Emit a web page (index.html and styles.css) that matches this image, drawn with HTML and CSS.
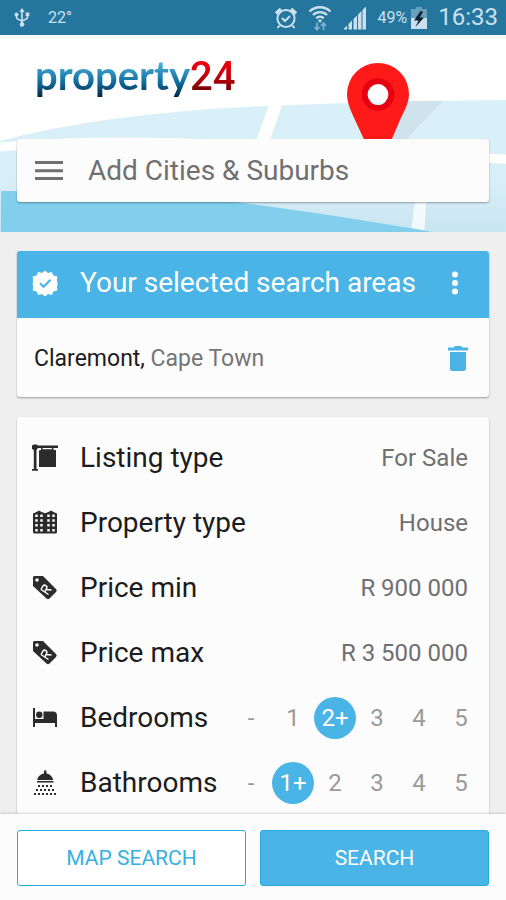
FILE: index.html
```html
<!DOCTYPE html>
<html lang="en">
<head>
<meta charset="utf-8">
<meta name="viewport" content="width=device-width, initial-scale=1">
<title>property24</title>
<link rel="stylesheet" href="styles.css">
</head>
<body>
<header class="status">
  <svg class="usb" width="16" height="20" viewBox="0 0 16 20" fill="none" stroke="currentColor" stroke-width="1.6" aria-hidden="true">
    <path d="M8 3v13M2.500 7v2.500c0 2.500 5.500 2 5.500 4.500M13.500 6v3.500c0 2.500-5.500 2-5.500 4.500"/>
    <path d="M8 0l2.700 4H5.300zM11.700 4.500h3.600v3.600h-3.600z" fill="currentColor" stroke="none"/>
    <circle cx="2.500" cy="6.500" r="2" fill="currentColor" stroke="none"/>
    <circle cx="8" cy="16.500" r="2.300" fill="currentColor" stroke="none"/>
  </svg>
  <span class="temp">22°</span>
  <div class="status-right">
    <svg width="22" height="24" viewBox="0 0 22 24" fill="none" stroke="currentColor" stroke-width="2" aria-hidden="true">
      <circle cx="11" cy="12.500" r="8.600"/>
      <path d="M7 12l3 3 5-5M4.500 19.500L2.500 22M17.500 19.500l2 2.500"/>
      <path d="M1 7.500L6 3M21 7.500L16 3" stroke-width="3.400"/>
    </svg>
    <svg width="24" height="26" viewBox="0 0 24 26" fill="none" stroke="currentColor" stroke-width="2.400" aria-hidden="true">
      <path d="M1.500 6.500a15 15 0 0 1 21 0M5 10a10 10 0 0 1 14 0M8.300 13.300a5.300 5.300 0 0 1 7.400 0"/>
      <circle cx="12" cy="15.800" r="1.600" fill="currentColor" stroke="none"/>
      <path d="M9 17.500v7M6.500 22L9 24.800 11.500 22M15.500 25v-6.500M13 20.800l2.500-2.800 2.500 2.800" stroke-width="1.800" opacity=".55"/>
    </svg>
    <svg width="24" height="24" viewBox="0 0 24 24" fill="currentColor" aria-hidden="true">
      <path d="M1 23.500v-1l3-3v4zM5.500 23.500V18l3.500-3.500v9zM10.500 23.500V13L14 9.500v14zM15 23.500V8.500L18.500 5v18.500zM19.500 23.500V4L23 .5v23z"/>
    </svg>
    <span class="battery-level">49%</span>
    <svg width="16" height="22" viewBox="0 0 16 22" aria-hidden="true">
      <path d="M5 0h6v2h5v10H0V2h5z" fill="currentColor" opacity=".4"/>
      <path d="M0 11h16v11H0z" fill="currentColor"/>
      <path d="M9.500 4L3 13.500h4.500L4.500 20 13 10.500H8.800L12 4.800z" fill="#0d2230"/>
    </svg>
    <time class="clock">16:33</time>
  </div>
</header>

<main class="content">
  <section class="hero">
    <svg class="map" viewBox="0 0 506 197" preserveAspectRatio="xMidYMid slice" aria-hidden="true">
      <defs>
        <linearGradient id="land" x1="0" y1="0" x2="0" y2="1">
          <stop offset="0" stop-color="#daf0f9"/><stop offset=".6" stop-color="#d9eff8"/><stop offset="1" stop-color="#c9e5f1"/>
        </linearGradient>
      </defs>
      <rect width="506" height="197" fill="#fff"/>
      <path d="M0 106Q100 79 253 71.500 380 66 506 65v132H0z" fill="url(#land)"/>
      <path d="M0 112Q60 106.500 130 107T300 112 510 124.500" fill="none" stroke="#fff" stroke-width="9"/>
      <path d="M276 69L262 108" fill="none" stroke="#fff" stroke-width="12.500"/>
      <path d="M415 165h11.500l-2 30-13-2z" fill="#f3fafd"/>
      <path d="M1 156H130Q253 166 433 197H1z" fill="#82ceed"/>
      <path d="M395 66.500l48-.8-40 42H378z" fill="#cfe3ec"/>
      <path d="M378 28a31 31 0 0 0-31 31c0 10 5 19 8 26l13 28h20l12-28c3-7 9-16 9-26a31 31 0 0 0-31-31z" fill="#ff1a1a"/>
      <circle cx="378" cy="59.500" r="16.300" fill="#e60012"/>
      <circle cx="378" cy="59.500" r="10.400" fill="#fff"/>
      <path d="M370.500 66.800h15a10.400 10.400 0 0 1-15 0z" fill="#e4f3f9"/>
    </svg>
    <h1 class="logo"><span class="logo-name">property</span><span class="logo-num">24</span></h1>
    <form class="search" role="search">
      <button class="icon-button" type="button" aria-label="Menu">
        <svg width="28" height="20" viewBox="0 0 28 20" fill="#707070" aria-hidden="true"><path d="M0 0h28v3H0zM0 8.300h28v3H0zM0 16h28v3H0z"/></svg>
      </button>
      <input class="search-input" type="text" placeholder="Add Cities &amp; Suburbs" aria-label="Add Cities &amp; Suburbs">
    </form>
  </section>

  <section class="card areas">
    <header class="areas-head">
      <svg class="badge" width="26" height="26" viewBox="0 0 26 26" aria-hidden="true">
        <path d="M13 .5l3 2.600 3.800-1.200 1.600 3.700 3.900.9-.4 4 .8 3-.8 3 .4 3.900-3.900 1-1.600 3.600-3.800-1.100-3 2.600-3-2.600-3.800 1.100-1.600-3.600-3.900-1 .4-3.900L.6 13.500l.5-3-.4-4 3.900-.9 1.600-3.700L10 3.100z" fill="#fff"/>
        <path d="M8 13.200l3.600 3.600 7-7" fill="none" stroke="#49b4e5" stroke-width="2.200"/>
      </svg>
      <h2 class="areas-title">Your selected search areas</h2>
      <button class="icon-button" type="button" aria-label="More options">
        <svg width="6" height="24" viewBox="0 0 6 24" fill="#fff" aria-hidden="true"><circle cx="3" cy="3.500" r="3"/><circle cx="3" cy="12" r="3"/><circle cx="3" cy="20.500" r="3"/></svg>
      </button>
    </header>
    <div class="area">
      <p class="area-name">Claremont, <span class="area-city">Cape Town</span></p>
      <button class="icon-button" type="button" aria-label="Remove Claremont">
        <svg width="20" height="26" viewBox="0 0 20 26" fill="#49b4e5" aria-hidden="true"><path d="M0 1.500h5.500L7 0h6l1.500 1.500H20v3H0zM2 6h16v16.500a2.500 2.500 0 0 1-2.500 2.500h-11A2.500 2.500 0 0 1 2 22.500z"/></svg>
      </button>
    </div>
  </section>

  <section class="card filters">
    <div class="row">
      <svg class="row-icon" width="28" height="28" viewBox="0 0 28 28" fill="#2b2b2b" aria-hidden="true"><path d="M1 1.500L3 .5h2.500l1.500 1H27v2.500H7L5.500 6v19H7v1.700H1V25h1.800V6L1 5z"/><path d="M8 6.500l2-.5V4h1.500v1.200H21V4h1.500v2H25v17H8z"/></svg>
      <label class="row-label" for="listing">Listing type</label>
      <select class="value" id="listing"><option>For Sale</option></select>
    </div>
    <div class="row">
      <svg class="row-icon" width="28" height="28" viewBox="0 0 28 28" aria-hidden="true">
        <path d="M2 6V4.500L5.500 3l2.500-1.500L10.500 3l3.500 1.200L17.500 3 20 1.500 22.500 3 26 4.500V23a1.500 1.500 0 0 1-1.500 1.500h-21A1.500 1.500 0 0 1 2 23z" fill="#2b2b2b"/>
        <path d="M5.500 5.500v17M10.500 5.500v17M17.500 5.500v17M22.500 5.500v17" stroke="#fcfcfc" stroke-width="2.500" stroke-dasharray="2.500 2.300" fill="none"/>
      </svg>
      <label class="row-label" for="property">Property type</label>
      <select class="value" id="property"><option>House</option></select>
    </div>
    <div class="row">
      <svg class="row-icon" width="28" height="28" viewBox="0 0 28 28" aria-hidden="true">
        <path d="M2 3.500A1.500 1.500 0 0 1 3.500 2H12l13 13q1.500 1.500 0 3l-6.500 6.500q-1.500 1.500-3 0L2 12z" fill="#2b2b2b"/>
        <circle cx="6" cy="6" r="1.800" fill="#fcfcfc"/>
        <path d="M10 15.500l7.500 5M10 15.500l2-3.500c1.500-2 5 0 3.500 2.500l-1.500 3M15 15.500l5.500.5" fill="none" stroke="#fcfcfc" stroke-width="1.500"/>
      </svg>
      <label class="row-label" for="min">Price min</label>
      <select class="value" id="min"><option>R 900 000</option></select>
    </div>
    <div class="row">
      <svg class="row-icon" width="28" height="28" viewBox="0 0 28 28" aria-hidden="true">
        <path d="M2 3.500A1.500 1.500 0 0 1 3.500 2H12l13 13q1.500 1.500 0 3l-6.500 6.500q-1.500 1.500-3 0L2 12z" fill="#2b2b2b"/>
        <circle cx="6" cy="6" r="1.800" fill="#fcfcfc"/>
        <path d="M10 15.500l7.500 5M10 15.500l2-3.500c1.500-2 5 0 3.500 2.500l-1.500 3M15 15.500l5.500.5" fill="none" stroke="#fcfcfc" stroke-width="1.500"/>
      </svg>
      <label class="row-label" for="max">Price max</label>
      <select class="value" id="max"><option>R 3 500 000</option></select>
    </div>
    <div class="row" role="radiogroup" aria-labelledby="beds">
      <svg class="row-icon" width="28" height="28" viewBox="0 0 28 28" fill="#2b2b2b" aria-hidden="true"><path d="M2 4h2v11h8.500V7.500H22a4 4 0 0 1 4 4V23h-2v-4H4v4H2z"/><circle cx="8.300" cy="10.800" r="3.200"/></svg>
      <span class="row-label" id="beds">Bedrooms</span>
      <div class="steps">
        <label class="step"><input type="radio" name="beds"><span>-</span></label>
        <label class="step"><input type="radio" name="beds"><span>1</span></label>
        <label class="step"><input type="radio" name="beds" checked><span>2+</span></label>
        <label class="step"><input type="radio" name="beds"><span>3</span></label>
        <label class="step"><input type="radio" name="beds"><span>4</span></label>
        <label class="step"><input type="radio" name="beds"><span>5</span></label>
      </div>
    </div>
    <div class="row" role="radiogroup" aria-labelledby="baths">
      <svg class="row-icon" width="28" height="28" viewBox="0 0 28 28" fill="#2b2b2b" aria-hidden="true">
        <path d="M13 1.500h2.400v3c3.600.6 6.300 3.200 6.800 6.500h-16c.5-3.300 3.200-5.900 6.800-6.500zM6 12h16.500v1.500H6z"/>
        <g fill="none" stroke="#2b2b2b" stroke-width="2"><path d="M7 17h14" stroke-dasharray="2 2"/><path d="M5 21h18" stroke-dasharray="2 2"/><path d="M3 25h22" stroke-dasharray="2 2"/></g>
      </svg>
      <span class="row-label" id="baths">Bathrooms</span>
      <div class="steps">
        <label class="step"><input type="radio" name="baths"><span>-</span></label>
        <label class="step"><input type="radio" name="baths" checked><span>1+</span></label>
        <label class="step"><input type="radio" name="baths"><span>2</span></label>
        <label class="step"><input type="radio" name="baths"><span>3</span></label>
        <label class="step"><input type="radio" name="baths"><span>4</span></label>
        <label class="step"><input type="radio" name="baths"><span>5</span></label>
      </div>
    </div>
  </section>
</main>

<footer class="actions">
  <button class="action outline" type="button">MAP SEARCH</button>
  <button class="action solid" type="button">SEARCH</button>
</footer>
</body>
</html>
```
FILE: styles.css
```css
* { box-sizing: border-box; }

body {
  margin: 0;
  height: 100vh;
  display: flex;
  flex-direction: column;
  background: #efefef;
  color: #1c1c1c;
  font-family: Roboto, "Liberation Sans", sans-serif;
}

button, input, select { font: inherit; color: inherit; }
svg { display: block; flex: none; }

.status {
  display: flex;
  align-items: center;
  flex: none;
  padding: 0 8px 0 14px;
  height: 35px;
  background: #24769f;
  color: #cbe0ec;
}
.temp {
  margin-left: 18px;
  font-size: 16px;
}
.status-right {
  display: flex;
  align-items: center;
  gap: 11px;
  margin-left: auto;
}
.battery-level { font-size: 16px; margin-right: -7px; }
.clock { font-size: 24px; line-height: 35px; }

.content {
  flex: 1;
  min-height: 0;
  overflow-y: auto;
  scrollbar-width: none;
}

.hero {
  position: relative;
  padding: 16px 17px 30px;
}
.map {
  position: absolute;
  inset: 0;
  width: 100%;
  height: 100%;
}
.logo {
  position: relative;
  display: flex;
  align-items: baseline;
  margin: 0 0 38px 18px;
  font-family: Lato, sans-serif;
  font-size: 40px;
  line-height: 48px;
  font-weight: 700;
}
.logo-name, .logo-num {
  color: transparent;
  -webkit-background-clip: text;
  background-clip: text;
}
.logo-name { background-image: linear-gradient(#48acd8 28%, #0f6d9e 65%, #062846 95%); }
.logo-num {
  background-image: linear-gradient(#f00010 18%, #c0000a 50%, #700000 80%);
  font-family: Roboto, sans-serif;
  font-weight: 500;
}

.search {
  position: relative;
  display: flex;
  align-items: center;
  height: 63px;
  padding-left: 18px;
  border-radius: 3px;
  background: #fcfcfc;
  box-shadow: 0 1px 2px rgba(0, 0, 0, .35);
}
.search-input {
  flex: 1;
  min-width: 0;
  margin-left: 25px;
  padding: 0;
  border: 0;
  outline: 0;
  background: none;
  font-size: 28px;
}
.search-input::placeholder { color: #707070; opacity: 1; }

.icon-button {
  display: flex;
  padding: 0;
  border: 0;
  background: none;
  cursor: pointer;
}

.card {
  margin: 19px 17px 20px;
  border-radius: 3px;
  background: #fcfcfc;
  box-shadow: 0 1px 2px rgba(0, 0, 0, .35);
}
.areas-head {
  display: flex;
  align-items: center;
  height: 67px;
  padding: 0 31px 4px 15px;
  border-radius: 3px 3px 0 0;
  background: #49b4e5;
  color: #fff;
}
.areas-title {
  flex: 1;
  margin: 0 0 0 22px;
  font-size: 28px;
  line-height: 36px;
  font-weight: 400;
}
.area {
  display: flex;
  align-items: center;
  justify-content: space-between;
  height: 79px;
  padding: 2px 21px 0 17px;
}
.area-name { margin: 0; font-size: 23px; line-height: 28px; }
.area-city { color: #757575; }

.filters { padding: 8px 0; }
.row {
  display: flex;
  align-items: center;
  height: 65px;
  padding: 0 7px 0 14px;
}
.row-label { margin-left: 21px; font-size: 28px; }
.value {
  appearance: none;
  margin: 0 14px 0 auto;
  padding: 0;
  border: 0;
  background: none;
  color: #707070;
  font-size: 24px;
  text-align: right;
  text-align-last: right;
}
.steps {
  display: flex;
  margin-left: auto;
  color: #9a9a9a;
  font-size: 24px;
}
.step { position: relative; cursor: pointer; }
.step input {
  position: absolute;
  inset: 0;
  margin: 0;
  opacity: 0;
}
.step span {
  display: block;
  width: 42px;
  border-radius: 50%;
  line-height: 42px;
  text-align: center;
}
.step input:checked + span { background: #49b4e5; color: #fff; }

.actions {
  display: flex;
  flex: none;
  gap: 14px;
  padding: 16px 17px 14px;
  background: #fcfcfc;
  box-shadow: 0 -1px 2px rgba(0, 0, 0, .15);
  position: relative;
}
.action {
  flex: 1;
  height: 56px;
  border: 1px solid #1fade0;
  border-radius: 3px;
  font-size: 21px;
}
.outline { background: #fff; color: #36b0e2; }
.solid { background: #49b4e5; color: #fff; }
```
